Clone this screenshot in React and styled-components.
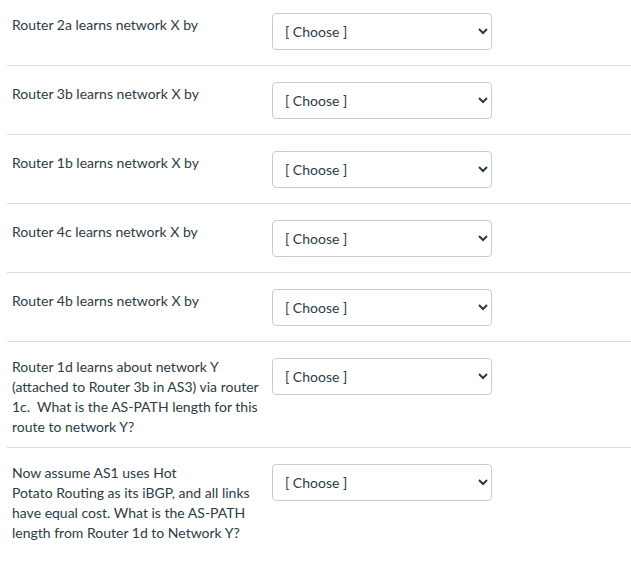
import React from "react";
import styled, { createGlobalStyle } from "styled-components";

const GlobalStyle = createGlobalStyle`
  body {
    margin: 0;
    background: #fff;
    font-family: Lato, "Noto Sans", sans-serif;
    color: #2d3b45;
  }
`;

const List = styled.div`
  width: 624px;
  margin-left: 7px;
`;

const Row = styled.div`
  display: flex;
  align-items: flex-start;
  padding: ${(props) => (props.first ? "13px" : "16px")} 0 9px;
  border-top: ${(props) => (props.first ? "none" : "1px solid #dadde0")};
`;

const Label = styled.div`
  width: 250px;
  margin: ${(props) => (props.single ? "2px 10px 0 0" : "-1px 10px 1px 0")};
  padding-left: 5px;
  font-size: 14px;
  line-height: 20px;
`;

const Select = styled.select`
  width: 220px;
  height: 37px;
  margin-bottom: 6px;
  padding: 0 8px;
  font-family: Lato, "Noto Sans", sans-serif;
  font-size: 14px;
  color: #2d3b45;
  background: #fff;
  border: 1px solid #c7cdd1;
  border-radius: 4px;
`;

const questions = [
  { text: "Router 2a learns network X by", single: true },
  { text: "Router 3b learns network X by", single: true },
  { text: "Router 1b learns network X by", single: true },
  { text: "Router 4c learns network X by", single: true },
  { text: "Router 4b learns network X by", single: true },
  {
    text: (
      <>
        Router 1d learns about network Y (attached to Router 3b in AS3) via
        router 1c.&nbsp; What is the AS-PATH length for this route to network
        Y?
      </>
    ),
  },
  {
    text: (
      <>
        Now assume AS1 uses Hot
        <br />
        Potato Routing as its iBGP, and all links have equal cost. What is the
        AS-PATH length from Router 1d to Network Y?
      </>
    ),
  },
];

const App = () => {
  return (
    <>
      <GlobalStyle />
      <List>
        {questions.map((q, i) => (
          <Row key={i} first={i === 0}>
            <Label single={q.single}>{q.text}</Label>
            <Select defaultValue="">
              <option value="">[ Choose ]</option>
            </Select>
          </Row>
        ))}
      </List>
    </>
  );
};

export default App;
